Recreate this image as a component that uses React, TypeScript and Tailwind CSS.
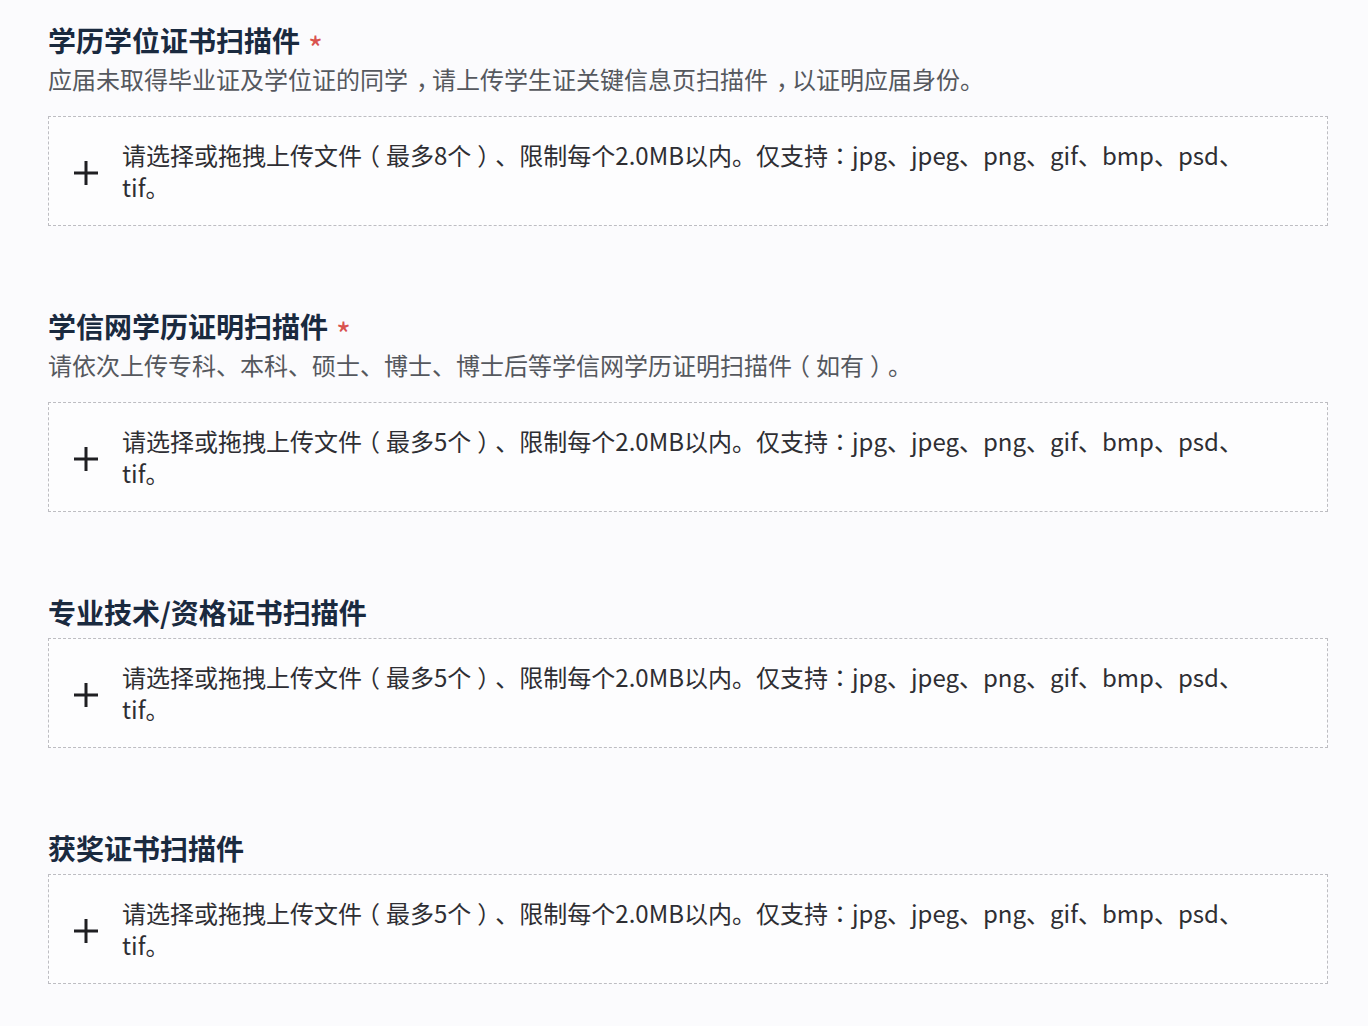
type UploadField = {
  title: string;
  required?: boolean;
  hint?: string;
  maxFiles: number;
};

const fields: UploadField[] = [
  {
    title: "学历学位证书扫描件",
    required: true,
    hint: "应届未取得毕业证及学位证的同学，请上传学生证关键信息页扫描件，以证明应届身份。",
    maxFiles: 8,
  },
  {
    title: "学信网学历证明扫描件",
    required: true,
    hint: "请依次上传专科、本科、硕士、博士、博士后等学信网学历证明扫描件（如有）。",
    maxFiles: 5,
  },
  { title: "专业技术/资格证书扫描件", maxFiles: 5 },
  { title: "获奖证书扫描件", maxFiles: 5 },
];

const font = { fontFamily: '"Noto Sans CJK SC", "Noto Sans", sans-serif' };

// full-width brackets, commas and colons sit centred in their box
function Punct({ text }: { text: string }) {
  const parts = text.split(/([，（）：])/);
  return (
    <>
      {parts.map((part, i) => {
        if (part === "（") return <span key={i} className="relative -left-[6px]">{part}</span>;
        if (part === "）") return <span key={i} className="relative left-[6px]">{part}</span>;
        if (part === "，") return <span key={i} className="relative left-[8px]">{part}</span>;
        if (part === "：") return <span key={i} className="font-['Noto_Sans_CJK_KR',sans-serif]">{part}</span>;
        return part;
      })}
    </>
  );
}

function PlusIcon() {
  return (
    <svg width="26" height="26" viewBox="0 0 26 26" className="text-[#1f1f22]">
      <path d="M13 1v24M1 13h24" stroke="currentColor" strokeWidth="3" />
    </svg>
  );
}

function UploadBox({ maxFiles }: { maxFiles: number }) {
  return (
    <label className="flex h-[110px] w-[1280px] cursor-pointer items-center border border-dashed border-[#bdbdc2] bg-[#fdfdfe]">
      <input type="file" multiple className="hidden" />
      <span className="flex w-[73px] shrink-0 justify-center pt-[4px]">
        <PlusIcon />
      </span>
      <span className="w-[1150px] text-[24px] leading-[32px] text-[#2e2e33] [text-spacing-trim:space-all]">
        <Punct text={`请选择或拖拽上传文件（最多${maxFiles}个）、限制每个2.0MB以内。仅支持：jpg、jpeg、png、gif、bmp、psd、tif。`} />
      </span>
    </label>
  );
}

export default function App() {
  return (
    <main className="min-h-screen bg-[#fbfbfd] pl-[48px] pt-[22px]" style={font}>
      <div className="flex flex-col gap-[82px]">
        {fields.map((field) => (
          <section key={field.title}>
            <h2 className="flex items-center text-[28px] font-bold leading-[36px] text-[#1a2a3f]">
              {field.title}
              {field.required && (
                <span className="ml-[8px] translate-y-[7px] text-[32px] font-normal leading-none text-[#d9534f]">*</span>
              )}
            </h2>
            {field.hint ? (
              <p className="mb-[21px] mt-[5px] text-[24px] leading-[32px] text-[#55585e] [text-spacing-trim:space-all]">
                <Punct text={field.hint} />
              </p>
            ) : (
              <div className="h-[8px]" />
            )}
            <UploadBox maxFiles={field.maxFiles} />
          </section>
        ))}
      </div>
    </main>
  );
}
